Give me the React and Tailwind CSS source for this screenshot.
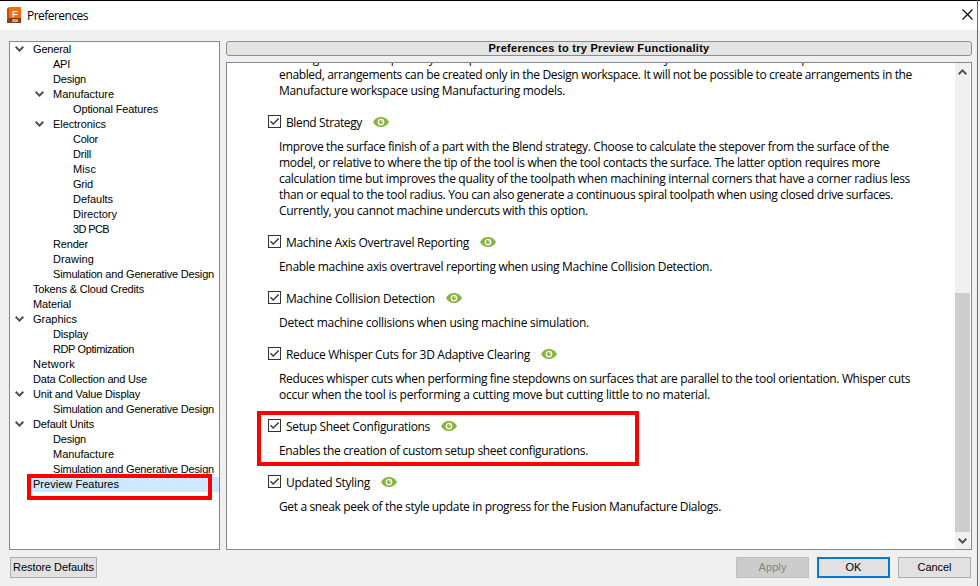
import { useLayoutEffect, useRef, useState } from "react";

// A single line of text whose tracking is adjusted so that it spans `width` pixels.
function Line({ width, children }) {
  const ref = useRef(null);
  const [spacing, setSpacing] = useState(0);
  useLayoutEffect(() => {
    const natural = ref.current.getBoundingClientRect().width;
    setSpacing((width - natural) / children.length);
  }, []);
  return (
    <span ref={ref} className="inline-block whitespace-pre" style={{ letterSpacing: `${spacing}px` }}>
      {children}
    </span>
  );
}

const tree = [
  ["General", 0, 38, true],
  ["API", 1, 17],
  ["Design", 1, 33],
  ["Manufacture", 1, 61, true],
  ["Optional Features", 2, 85],
  ["Electronics", 1, 53, true],
  ["Color", 2, 25],
  ["Drill", 2, 18],
  ["Misc", 2, 23],
  ["Grid", 2, 20],
  ["Defaults", 2, 40],
  ["Directory", 2, 44],
  ["3D PCB", 2, 36],
  ["Render", 1, 35],
  ["Drawing", 1, 41],
  ["Simulation and Generative Design", 1, 161],
  ["Tokens & Cloud Credits", 0, 111],
  ["Material", 0, 38],
  ["Graphics", 0, 44, true],
  ["Display", 1, 35],
  ["RDP Optimization", 1, 81],
  ["Network", 0, 42],
  ["Data Collection and Use", 0, 114],
  ["Unit and Value Display", 0, 107, true],
  ["Simulation and Generative Design", 1, 161],
  ["Default Units", 0, 61, true],
  ["Design", 1, 33],
  ["Manufacture", 1, 61],
  ["Simulation and Generative Design", 1, 161],
  ["Preview Features", 0, 86, false, true],
];

const indents = ["pl-[5px]", "pl-[25px]", "pl-[45px]"];

const features = [
  {
    title: ["Blend Strategy", 76],
    lines: [
      ["Improve the surface finish of a part with the Blend strategy. Choose to calculate the stepover from the surface of the", 610],
      ["model, or relative to where the tip of the tool is when the tool contacts the surface. The latter option requires more", 601],
      ["calculation time but improves the quality of the toolpath when machining internal corners that have a corner radius less", 631],
      ["than or equal to the tool radius. You can also generate a continuous spiral toolpath when using closed drive surfaces.", 614],
      ["Currently, you cannot machine undercuts with this option.", 309],
    ],
  },
  {
    title: ["Machine Axis Overtravel Reporting", 183],
    lines: [["Enable machine axis overtravel reporting when using Machine Collision Detection.", 433]],
  },
  {
    title: ["Machine Collision Detection", 149],
    lines: [["Detect machine collisions when using machine simulation.", 310]],
  },
  {
    title: ["Reduce Whisper Cuts for 3D Adaptive Clearing", 244],
    lines: [
      ["Reduces whisper cuts when performing fine stepdowns on surfaces that are parallel to the tool orientation. Whisper cuts", 631],
      ["occur when the tool is performing a cutting move but cutting little to no material.", 431],
    ],
  },
  {
    title: ["Setup Sheet Configurations", 144],
    lines: [["Enables the creation of custom setup sheet configurations.", 309]],
    marked: true,
  },
  {
    title: ["Updated Styling", 84],
    lines: [["Get a sneak peek of the style update in progress for the Fusion Manufacture Dialogs.", 442]],
  },
];

function Chevron({ up = false }) {
  return (
    <svg width="9" height="6" viewBox="0 0 9 6" className="mb-px" fill="none" stroke="#505050" strokeWidth="2">
      <path d={up ? "M0.7 5.2 4.5 1.4 8.3 5.2" : "M0.7 0.8 4.5 4.6 8.3 0.8"} />
    </svg>
  );
}

function Eye() {
  return (
    <svg width="16" height="10" viewBox="0 0 16 10" className="mb-[2px]">
      <path d="M0 5C1.8 1.7 4.6 0 8 0s6.2 1.7 8 5c-1.8 3.300-4.600 5-8 5S1.800 8.300 0 5Z" fill="#87b340" />
      <circle cx="8" cy="5" r="2.700" fill="none" stroke="#fff" strokeWidth="1.300" />
      <path d="M8 3.700a1.300 1.300 0 0 1 1.300 1.300" fill="none" stroke="#fff" strokeWidth="0.800" />
    </svg>
  );
}

function Checkbox() {
  return (
    <span className="mb-[3px] flex h-[13px] w-[13px] shrink-0 items-center justify-center border border-[#333] bg-white">
      <svg width="11" height="11" viewBox="0 0 11 11" fill="none" stroke="#333" strokeWidth="1.300">
        <path d="M1.500 5.300 4.200 8 9.700 2.500" />
      </svg>
    </span>
  );
}

function Logo() {
  return (
    <svg width="15" height="17" viewBox="0 0 15 17" className="mb-px font-['Liberation_Sans',sans-serif]">
      <path d="M2 0h12v14H2z" fill="#ff6b00" />
      <path d="M0 2l2-2v13l-2 2z" fill="#c64d08" />
      <path d="M0 13l2-2h12v5H0z" fill="#8a3a10" />
      <text x="5" y="9.500" fontSize="9.500" fontWeight="700" fill="#fff">F</text>
      <text x="5" y="15" fontSize="3.500" fontWeight="700" fill="#fff">360</text>
    </svg>
  );
}

export default function App() {
  return (
    <div className="relative flex h-[586px] w-[980px] flex-col overflow-hidden bg-[#f0f0f0] font-['Liberation_Sans',Arial,sans-serif] text-[11px] text-black">
      <header className="flex h-[30px] shrink-0 items-center border-t border-black bg-white pr-[7px] pl-[7px]">
        <Logo />
        <h1 className="ml-[5px] font-['Open_Sans','Noto_Sans',sans-serif] text-[12px] leading-4">
          <Line width={61}>Preferences</Line>
        </h1>
        <svg width="11" height="11" viewBox="0 0 11 11" className="mb-[2px] ml-auto" stroke="#000" strokeWidth="1.100">
          <path d="M0.500 0.500 10.500 10.500M10.500 0.500 0.500 10.500" />
        </svg>
      </header>

      <main className="flex h-[520px] shrink-0 gap-[6px] pt-[11px] pl-[9px]">
        <nav className="relative h-[509px] w-[211px] border border-[#828790] bg-white">
          {tree.map(([label, level, width, open, selected], i) => (
            <div key={i} className="flex h-[15px] items-center">
              {level === 1 && open ? (
                <span className="flex h-full w-[43px] items-center pl-[25px]"><Chevron /></span>
              ) : open ? (
                <span className="flex h-full w-[23px] items-center pl-[5px]"><Chevron /></span>
              ) : (
                <span className="h-full w-[18px]" />
              )}
              <span
                className={
                  open
                    ? "leading-[15px]"
                    : `h-full flex-1 leading-[15px] ${indents[level]} ${selected ? "bg-[#cde8ff]" : ""}`
                }
              >
                <Line width={width}>{label}</Line>
              </span>
            </div>
          ))}
          <div className="absolute top-[432px] left-[17px] h-[26px] w-[185px] border-4 border-[#ff0000]" />
        </nav>

        <div className="flex w-[746px] flex-col gap-[6px]">
          <div className="flex h-[15px] items-center justify-center rounded-[3px] border border-[#8c8e8a] bg-[#e4e4e4] pb-px font-bold">
            <Line width={221}>Preferences to try Preview Functionality</Line>
          </div>
          <section className="flex h-[488px] overflow-hidden border border-[#828790] bg-white pr-px font-['Open_Sans','Noto_Sans',sans-serif] text-[12px] leading-4">
            <div className="flex h-[486px] flex-1 flex-col overflow-hidden pl-[41px]">
              <div className="-mt-3 mb-4 flex shrink-0 flex-col items-start pl-[11px]">
                <Line width={629}>Arrangement of capability to export sketch models and assembly entities is a feature option when this is</Line>
                <Line width={633}>enabled, arrangements can be created only in the Design workspace. It will not be possible to create arrangements in the</Line>
                <Line width={286}>Manufacture workspace using Manufacturing models.</Line>
              </div>
              {features.map((f) => (
                <article key={f.title[0]} className="relative mb-4 shrink-0">
                  <div className="flex h-4 items-center">
                    <Checkbox />
                    <span className="mr-[11px] ml-[5px]">
                      <Line width={f.title[1]}>{f.title[0]}</Line>
                    </span>
                    <Eye />
                  </div>
                  <div className="mt-2 flex flex-col items-start pl-[11px]">
                    {f.lines.map(([text, width]) => (
                      <Line key={text} width={width}>{text}</Line>
                    ))}
                  </div>
                  {f.marked && (
                    <div className="absolute -top-2 -left-[11px] h-[55px] w-[382px] border-4 border-[#ff0000]" />
                  )}
                </article>
              ))}
            </div>
            <div className="flex w-[15px] flex-col items-center bg-[#f0f0f0]">
              <span className="flex h-[230px] items-start pt-[6px]"><Chevron up /></span>
              <span className="h-[239px] w-[15px] bg-[#cdcdcd]" />
              <span className="flex flex-1 items-center pt-[2px]"><Chevron /></span>
            </div>
          </section>
        </div>
      </main>

      <footer className="flex shrink-0 gap-2 pt-[7px] pr-[9px] pl-[10px]">
        <button className="mr-auto flex h-[21px] w-[87px] items-center justify-center border border-[#adadad] bg-[#e1e1e1]">
          <Line width={81}>Restore Defaults</Line>
        </button>
        <button className="flex h-[21px] w-[73px] items-center justify-center border border-[#bfbfbf] bg-[#cccccc] text-[#838383]">
          <Line width={28}>Apply</Line>
        </button>
        <button className="flex h-[21px] w-[73px] items-center justify-center border-2 border-[#0078d7] bg-[#e1e1e1]">
          <Line width={16}>OK</Line>
        </button>
        <button className="flex h-[21px] w-[73px] items-center justify-center border border-[#adadad] bg-[#e1e1e1]">
          <Line width={34}>Cancel</Line>
        </button>
      </footer>

      <div className="absolute top-0 right-[2px] h-full w-px bg-[#6a6a6a]" />
    </div>
  );
}
